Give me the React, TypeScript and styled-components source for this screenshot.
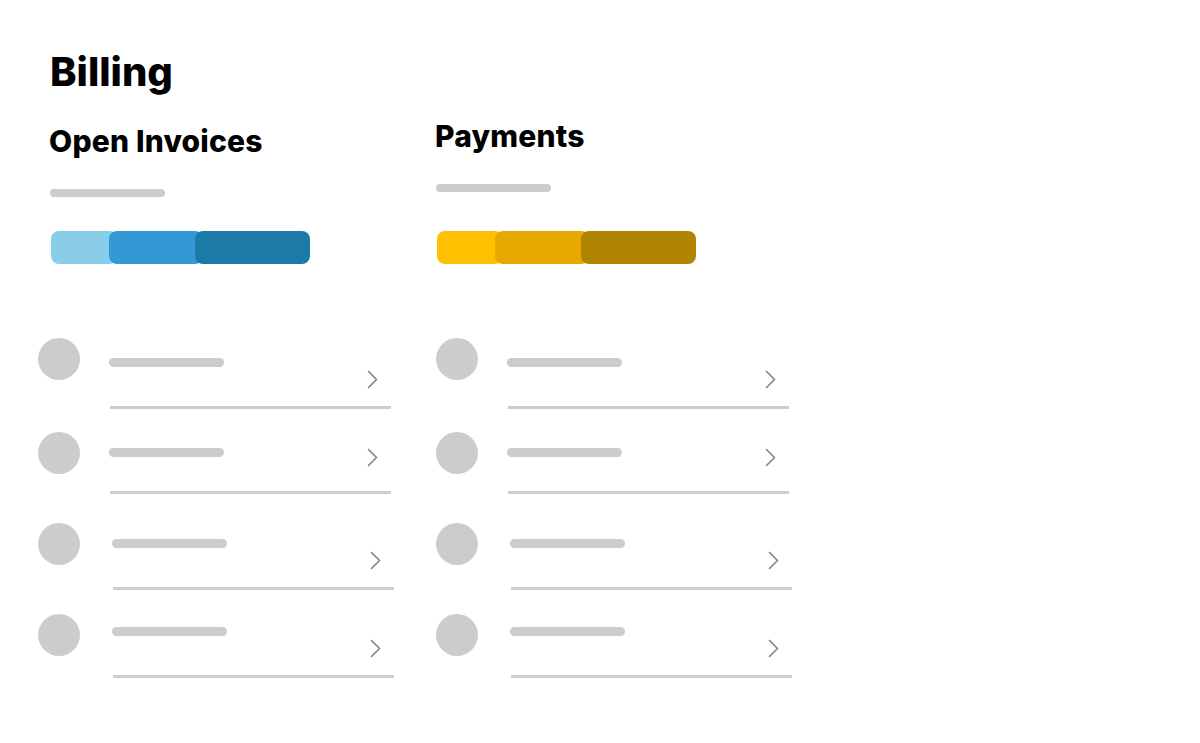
import styled, { createGlobalStyle } from "styled-components";

type Segment = {
  color: string;
  width: number;
};

type Row = {
  height: number;
  shift: number;
  bar: number;
  chevron: number;
  divider: number;
};

const invoiceSegments: Segment[] = [
  { color: "#89cdeb", width: 66 },
  { color: "#3399d4", width: 94 },
  { color: "#1c7ba6", width: 115 },
];

const paymentSegments: Segment[] = [
  { color: "#ffc000", width: 66 },
  { color: "#e6a900", width: 94 },
  { color: "#b08400", width: 115 },
];

const rows: Row[] = [
  { height: 94, shift: 0, bar: 20, chevron: 32, divider: 17 },
  { height: 91, shift: 0, bar: 16, chevron: 16, divider: 24 },
  { height: 91, shift: 3, bar: 16, chevron: 28, divider: 17 },
  { height: 91, shift: 3, bar: 13, chevron: 25, divider: 17 },
];

const GlobalStyle = createGlobalStyle`
  body {
    margin: 0;
    background: #ffffff;
    font-family: Inter, "Noto Sans", sans-serif;
    color: #000000;
  }
`;

const Chevron = () => (
  <svg width="11" height="19" viewBox="0 0 11 19">
    <polyline
      points="1.5,1.5 9.5,9.5 1.5,17.5"
      fill="none"
      stroke="#858585"
      strokeWidth="1.7"
      strokeLinecap="round"
      strokeLinejoin="round"
    />
  </svg>
);

const Summary = ({
  title,
  segments,
  drop,
  width,
}: {
  title: string;
  segments: Segment[];
  drop: number;
  width?: number;
}) => (
  <SummaryBlock $width={width}>
    <Heading $drop={drop}>{title}</Heading>
    <Skeleton />
    <Segments $gap={39 - drop}>
      {segments.map((s, i) => (
        <SegmentPart key={i} $color={s.color} $width={s.width} $first={i === 0} />
      ))}
    </Segments>
  </SummaryBlock>
);

const List = () => (
  <ListBlock>
    {rows.map((r, i) => (
      <ListRow key={i} $height={r.height}>
        <Avatar />
        <RowBody $shift={r.shift}>
          <RowBar $top={r.bar} />
          <ChevronCell $top={r.chevron}>
            <Chevron />
          </ChevronCell>
          <Divider $top={r.divider} />
        </RowBody>
      </ListRow>
    ))}
  </ListBlock>
);

export default function App() {
  return (
    <>
      <GlobalStyle />
      <Page>
        <Title>Billing</Title>
        <SummaryRow>
          <Summary title="Open Invoices" segments={invoiceSegments} drop={5} width={386} />
          <Summary title="Payments" segments={paymentSegments} drop={0} />
        </SummaryRow>
        <ListsRow>
          <List />
          <List />
        </ListsRow>
      </Page>
    </>
  );
}

const Page = styled.div`
  width: 1200px;
  min-height: 743px;
  padding-top: 48px;
  box-sizing: border-box;
`;

const Title = styled.h1`
  margin: 0 0 0 50px;
  font-size: 40px;
  line-height: 48px;
  font-weight: 800;
`;

const SummaryRow = styled.div`
  display: flex;
  align-items: flex-start;
  margin-top: 22px;
  padding-left: 50px;
`;

const SummaryBlock = styled.div<{ $width?: number }>`
  display: flex;
  flex-direction: column;
  align-items: flex-start;
  width: ${(p) => (p.$width ? `${p.$width}px` : "auto")};
`;

const Heading = styled.h2<{ $drop: number }>`
  margin: ${(p) => p.$drop}px 0 0 -1px;
  font-size: 30px;
  line-height: 36px;
  font-weight: 800;
  letter-spacing: 0.2px;
`;

const Skeleton = styled.div`
  margin-top: 30px;
  width: 115px;
  height: 8px;
  border-radius: 4px;
  background: #cccccc;
`;

const Segments = styled.div<{ $gap: number }>`
  display: flex;
  margin-top: ${(p) => p.$gap}px;
  margin-left: 1px;
`;

const SegmentPart = styled.div<{ $color: string; $width: number; $first: boolean }>`
  width: ${(p) => p.$width}px;
  height: 33px;
  border-radius: 8px;
  background: ${(p) => p.$color};
  margin-left: ${(p) => (p.$first ? 0 : -8)}px;
`;

const ListsRow = styled.div`
  display: flex;
  margin-top: 74px;
  padding-left: 38px;
`;

const ListBlock = styled.div`
  display: flex;
  flex-direction: column;
  width: 398px;
`;

const ListRow = styled.div<{ $height: number }>`
  display: flex;
  align-items: flex-start;
  height: ${(p) => p.$height}px;
`;

const Avatar = styled.div`
  width: 42px;
  height: 42px;
  border-radius: 50%;
  background: #cccccc;
  flex-shrink: 0;
`;

const RowBody = styled.div<{ $shift: number }>`
  display: grid;
  grid-template-columns: 1fr auto;
  align-items: start;
  width: 281px;
  margin-left: ${(p) => 30 + p.$shift}px;
`;

const RowBar = styled.div<{ $top: number }>`
  margin-top: ${(p) => p.$top}px;
  margin-left: -1px;
  width: 115px;
  height: 9px;
  border-radius: 4.5px;
  background: #cccccc;
`;

const ChevronCell = styled.div<{ $top: number }>`
  margin-top: ${(p) => p.$top}px;
  margin-right: 13px;
  height: 19px;
  display: flex;
`;

const Divider = styled.div<{ $top: number }>`
  grid-column: 1 / -1;
  margin-top: ${(p) => p.$top}px;
  height: 3px;
  background: #cccccc;
`;
